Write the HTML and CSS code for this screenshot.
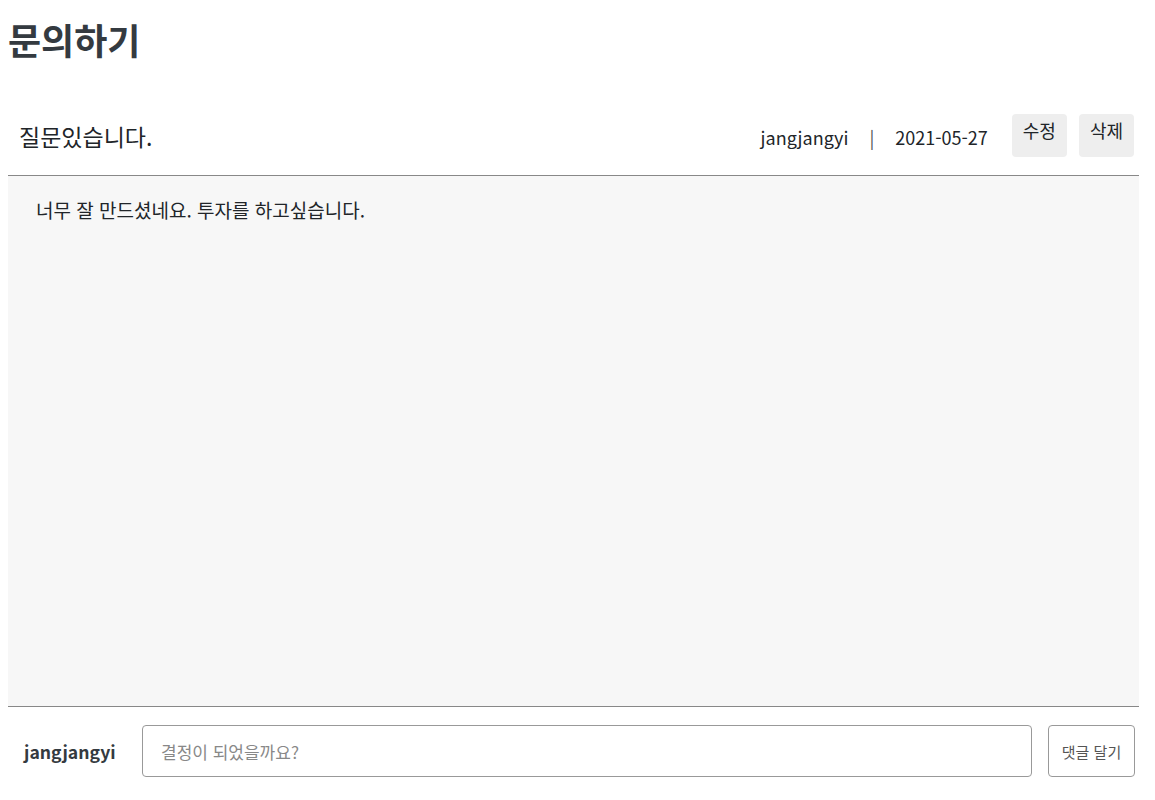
FILE: index.html
```html
<!DOCTYPE html>
<html lang="ko">
<head>
    <meta charset="UTF-8" />
    <title>문의하기</title>
    <link rel="stylesheet" href="styles.css">
</head>
<body>

<div class="container">
    <h1>문의하기</h1>

    <!-- Post header -->
    <div class="post-head">
        <div class="post-title">질문있습니다.</div>
        <div class="post-meta">
            <span class="author">jangjangyi</span>
            <span class="divider">|</span>
            <span class="date">2021-05-27</span>
            <button class="small-btn">수정</button>
            <button class="small-btn">삭제</button>
        </div>
    </div>

    <!-- Post body -->
    <div class="post-body">
        <p>너무 잘 만드셨네요. 투자를 하고싶습니다.</p>
    </div>

    <!-- Comment form -->
    <div class="comment-form">
        <span class="comment-user">jangjangyi</span>
        <input type="text" class="comment-input" placeholder="결정이 되었을까요?">
        <button class="comment-btn">댓글 달기</button>
    </div>
</div>

</body>
</html>
```

FILE: styles.css
```css
body {
    font-family: "Noto Sans CJK KR", "Noto Sans", sans-serif;
    color: #212529;
    background-color: #ffffff;
    margin: 8px;
}
.container {
    width: 1131px;
}
h1 {
    font-size: 36px;
    font-weight: 700;
    color: #343a40;
    margin: 4px 0 0 0;
    line-height: 54px;
}
.post-head {
    display: flex;
    justify-content: space-between;
    align-items: flex-start;
    margin-top: 48px;
    padding: 0 5px 18px 11px;
    border-bottom: 1px solid #888;
}
.post-title {
    font-size: 23px;
    margin-top: 5px;
    line-height: 34px;
}
.post-meta {
    display: flex;
    align-items: flex-start;
    font-size: 18px;
}
.author,
.divider,
.date {
    line-height: 28px;
    margin-top: 9px;
}
.divider {
    color: #555;
    margin: 9px 21px 0 21px;
}
.small-btn {
    font-family: inherit;
    font-size: 18px;
    color: #212529;
    background-color: #eeeeee;
    border: none;
    border-radius: 4px;
    height: 43px;
    padding: 2px 11px 0 11px;
    line-height: 28px;
    display: flex;
    align-items: flex-start;
    margin-left: 12px;
}
.small-btn:first-of-type {
    margin-left: 24px;
}
.post-body {
    background-color: #f7f7f7;
    height: 530px;
    border-bottom: 1px solid #888;
    padding: 0 28px;
}
.post-body p {
    margin: 0;
    padding-top: 20px;
    font-size: 19px;
    line-height: 28px;
}
.comment-form {
    display: flex;
    align-items: center;
    margin-top: 18px;
    padding-left: 16px;
}
.comment-user {
    font-size: 17.6px;
    font-weight: 700;
    color: #343a40;
    width: 118px;
    flex-shrink: 0;
}
.comment-input {
    font-family: inherit;
    font-size: 17px;
    height: 52px;
    width: 890px;
    box-sizing: border-box;
    border: 1px solid #999;
    border-radius: 4px;
    padding: 0 18px;
    color: #333;
}
.comment-input::placeholder {
    color: #888;
}
.comment-btn {
    font-family: inherit;
    font-size: 15px;
    color: #555;
    background-color: #ffffff;
    border: 1px solid #999;
    border-radius: 4px;
    height: 52px;
    width: 87px;
    margin-left: 16px;
}
```
